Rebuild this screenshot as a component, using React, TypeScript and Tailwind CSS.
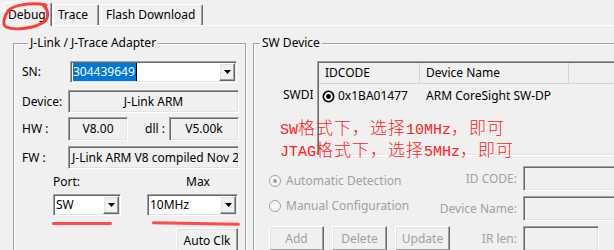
import React from "react";

const sunken =
  "border border-[#a0a0a0] border-b-white border-r-white shadow-[inset_1px_1px_0_#696969,inset_-1px_-1px_0_#e3e3e3]";
const raised =
  "border border-white border-b-[#696969] border-r-[#696969] shadow-[inset_-1px_-1px_0_#a0a0a0,inset_1px_1px_0_#e3e3e3]";

function DropButton() {
  return (
    <div className={`flex w-[16px] items-center justify-center bg-[#f0f0f0] ${raised}`}>
      <svg width="7" height="4" viewBox="0 0 7 4">
        <polygon points="0,0 7,0 3.5,4" fill="#000" />
      </svg>
    </div>
  );
}

function Combo({ className, children }: { className: string; children: React.ReactNode }) {
  return (
    <div className={`flex bg-white p-px ${sunken} ${className}`}>
      <div className="flex flex-1 items-center overflow-hidden whitespace-nowrap pl-px">{children}</div>
      <DropButton />
    </div>
  );
}

function Field({ className, center, children }: { className: string; center?: boolean; children?: React.ReactNode }) {
  return (
    <div
      className={`flex items-center overflow-hidden whitespace-nowrap bg-[#f0f0f0] ${sunken} ${
        center ? "justify-center" : "pl-[3px]"
      } ${className}`}
    >
      {children}
    </div>
  );
}

function Tab({ label, selected, className }: { label: string; selected?: boolean; className: string }) {
  return (
    <div
      className={`flex items-center rounded-t-[2px] border-l border-t border-white border-r border-r-[#696969] bg-[#f0f0f0] pl-[4px] shadow-[inset_-1px_0_0_#a0a0a0] ${
        selected ? "relative z-10 -mb-px h-[24px]" : "h-[21px]"
      } ${className}`}
    >
      {label}
    </div>
  );
}

function Radio({ checked }: { checked?: boolean }) {
  return (
    <svg width="12" height="12" viewBox="0 0 12 12">
      <circle cx="6" cy="6" r="5.5" fill="#f7f7f7" stroke="#a0a0a0" />
      {checked && <circle cx="6" cy="6" r="2" fill="#a0a0a0" />}
    </svg>
  );
}

function Button({ label, className }: { label: string; className: string }) {
  return (
    <div className={`flex h-[25px] items-center justify-center bg-[#f0f0f0] ${raised} ${className}`}>
      {label}
    </div>
  );
}

// SimSun-like mix: half-width latin, full-width CJK
function Note({ parts }: { parts: string[] }) {
  return (
    <div className="flex items-baseline">
      {parts.map((p, i) =>
        /[\u3000-\uffff]/.test(p) ? (
          <span key={i} className="font-['Noto_Sans_CJK_SC',serif] text-[17px] font-light tracking-[1px]">
            {p}
          </span>
        ) : (
          <span key={i} className="font-['Liberation_Mono',monospace] text-[15px]">
            {p}
          </span>
        )
      )}
    </div>
  );
}

export default function App() {
  return (
    <div className="relative h-[250px] w-[614px] overflow-hidden bg-[#f0f0f0] font-['Noto_Sans',sans-serif] text-[12px] leading-[16px] text-black">
      {/* tab strip */}
      <div className="flex h-[26px] items-end border-b border-white pl-[3px]">
        <Tab label="Debug" selected className="w-[49px]" />
        <Tab label="Trace" className="ml-px w-[46px]" />
        <Tab label="Flash Download" className="ml-[2px] w-[102px]" />
      </div>

      <div className="flex gap-[7px] pl-[13px] pt-[9px]">
        {/* J-Link adapter */}
        <fieldset className="h-[240px] w-[233px] shrink-0 border border-[#a0a0a0] pl-[8px] pt-[10px] shadow-[inset_1px_1px_0_#fff,1px_1px_0_#fff]">
          <legend className="ml-[6px] bg-[#f0f0f0] px-[2px]">J-Link / J-Trace Adapter</legend>

          <div className="flex h-[22px] items-center">
            <span className="w-[48px]">SN:</span>
            <Combo className="h-[22px] w-[167px]">
              <span className="flex h-full items-center bg-[#0078d7] pr-px text-white">304439649</span>
              <span className="h-full w-px bg-black" />
            </Combo>
          </div>

          <div className="mt-[7px] flex h-[23px] items-center">
            <span className="w-[46px]">Device:</span>
            <Field className="h-[23px] w-[171px]" center>
              J-Link ARM
            </Field>
          </div>

          <div className="mt-[4px] flex h-[24px] items-center">
            <span className="w-[46px]">HW :</span>
            <Field className="h-[24px] w-[60px]" center>
              V8.00
            </Field>
            <span className="ml-[17px] w-[24px]">dll :</span>
            <Field className="h-[24px] w-[70px]" center>
              V5.00k
            </Field>
          </div>

          <div className="mt-[5px] flex h-[23px] items-center">
            <span className="w-[46px]">FW :</span>
            <Field className="h-[23px] w-[171px]">J-Link ARM V8 compiled Nov 29 2012</Field>
          </div>

          <div className="mt-[5px] flex">
            <div className="ml-[31px] w-[68px]">
              <div>Port:</div>
              <Combo className="mt-[4px] h-[22px] w-[68px]">SW</Combo>
            </div>
            <div className="ml-[26px] w-[91px]">
              <div className="pl-[39px]">Max</div>
              <Combo className="mt-[4px] h-[22px] w-[91px]">10MHz</Combo>
              <Button label="Auto Clk" className="ml-auto mt-[12px] w-[62px]" />
            </div>
          </div>
        </fieldset>

        {/* SW device */}
        <fieldset className="h-[240px] w-[380px] shrink-0 border border-[#a0a0a0] pt-[10px] shadow-[inset_1px_1px_0_#fff,1px_1px_0_#fff]">
          <legend className="ml-[6px] bg-[#f0f0f0] px-[2px]">SW Device</legend>

          <div className="flex pl-[29px]">
            <div className="mr-[4px] w-[30px] overflow-hidden whitespace-nowrap pt-[26px]">SWDIO</div>
            <div className={`h-[95px] w-[310px] bg-[#f0f0f0] p-px ${sunken}`}>
              <div className="flex h-[21px] items-center border-b border-[#d5d5d5]">
                <div className="flex h-full w-[101px] items-center border-r border-[#d5d5d5] pl-[6px]">IDCODE</div>
                <div className="flex h-full w-[149px] items-center border-r border-[#d5d5d5] pl-[6px]">Device Name</div>
              </div>
              <div className="mt-[3px] flex h-[18px] items-center">
                <div className="flex w-[101px] items-center gap-[3px] pl-[3px]">
                  <svg width="13" height="13" viewBox="0 0 13 13">
                    <circle cx="6.5" cy="6.5" r="5.2" fill="none" stroke="#000" strokeWidth="1.6" />
                    <circle cx="6.5" cy="6.5" r="2.4" fill="#000" />
                  </svg>
                  <span>0x1BA01477</span>
                </div>
                <div className="pl-[6px]">ARM CoreSight SW-DP</div>
              </div>
            </div>
          </div>

          <div className="mt-[10px] pl-[15px] text-[#a0a0a0]">
            <div className="flex h-[25px]">
              <div className="flex w-[168px] items-start gap-[5px] pt-[7px]">
                <span className="mt-[2px]">
                  <Radio checked />
                </span>
                Automatic Detection
              </div>
              <div className="flex w-[80px] items-center justify-end">ID CODE:</div>
              <Field className="ml-[6px] h-[25px] w-[100px]" />
            </div>
            <div className="mt-[5px] flex h-[25px]">
              <div className="flex w-[168px] items-start gap-[5px] pt-[2px]">
                <span className="mt-[2px]">
                  <Radio />
                </span>
                Manual Configuration
              </div>
              <div className="flex w-[80px] items-center justify-end whitespace-nowrap">Device Name:</div>
              <Field className="ml-[6px] h-[25px] w-[100px]" />
            </div>
            <div className="mt-[5px] flex h-[25px]">
              <div className="flex w-[211px] gap-[8px]">
                <Button label="Add" className="w-[55px]" />
                <Button label="Delete" className="w-[55px]" />
                <Button label="Update" className="w-[55px]" />
              </div>
              <div className="flex w-[37px] items-center justify-end whitespace-nowrap">IR len:</div>
              <Field className="ml-[6px] h-[25px] w-[76px]" />
            </div>
          </div>
        </fieldset>
      </div>

      {/* red annotations */}
      <svg className="pointer-events-none absolute left-0 top-0 z-20" width="60" height="36" viewBox="0 0 60 36">
        <path
          d="M46 5 C30 2, 13 5, 8 11 C4 17, 2 24, 6 27 C15 31, 35 28, 44 22 C49 18, 49 10, 43 5"
          fill="none"
          stroke="#ff3b3b"
          strokeWidth="3"
          strokeLinecap="round"
        />
      </svg>
      <div className="pointer-events-none absolute left-[52px] top-[222px] z-20 h-[3px] w-[60px] rounded-full bg-[#ff4a4a]" />
      <div className="pointer-events-none absolute left-[152px] top-[222px] z-20 h-[3px] w-[88px] rotate-[1deg] rounded-full bg-[#ff4a4a]" />
      <div className="pointer-events-none absolute left-[280px] top-[118px] z-20 whitespace-nowrap leading-[18px] text-[#ff2020]">
        <Note parts={["SW", "格式下，选择", "10MHz", "，即可"]} />
        <Note parts={["JTAG", "格式下，选择", "5MHz", "，即可"]} />
      </div>
    </div>
  );
}
